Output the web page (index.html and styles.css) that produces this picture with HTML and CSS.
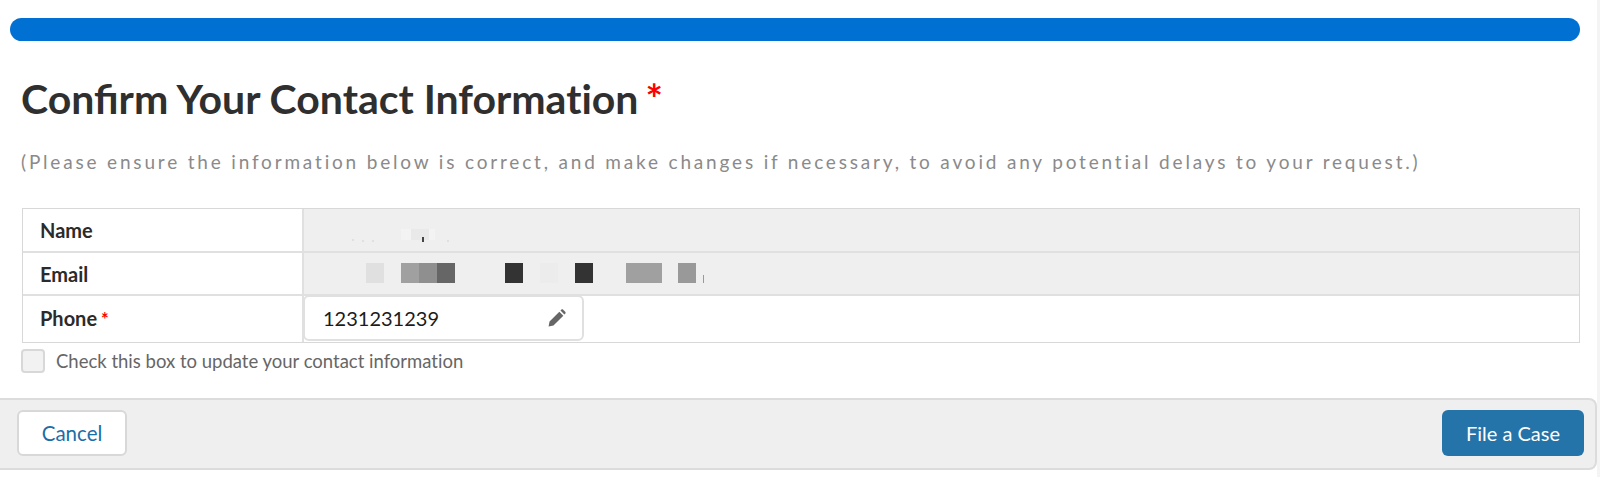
FILE: index.html
```html
<!DOCTYPE html>
<html lang="en">
<head>
<meta charset="utf-8">
<title>Confirm Your Contact Information</title>
<link rel="stylesheet" href="styles.css">
</head>
<body>
<div class="page">
  <main class="main">
    <div class="progress"></div>
    <h1 class="title">Confirm Your Contact <span class="nolig">Information</span> <span class="req title-req">*</span></h1>
    <p class="note">(Please ensure the information below is correct, and make changes if necessary, to avoid any potential delays to your request.)</p>
    <div class="table">
      <div class="row row-name">
        <div class="label">Name</div>
        <div class="value shaded">
          <div class="redact-name"><i class="dot d1"></i><i class="dot d2"></i><i class="dot d3"></i><i class="nb nb1"></i><i class="nb nb2"><i class="mark"></i></i><i class="nb nb3"></i><i class="dot d4"></i></div>
        </div>
      </div>
      <div class="row row-email">
        <div class="label">Email</div>
        <div class="value shaded">
          <div class="redact-email">
            <i class="b c-e0"></i><i class="b gap17 c-a0"></i><i class="b c-90"></i><i class="b c-66"></i>
            <i class="b gap50 c-33"></i><i class="b gap17 c-ee"></i><i class="b gap17 c-33"></i>
            <i class="b wide gap33 c-a0"></i><i class="b gap16 c-99"></i><i class="tick"></i>
          </div>
        </div>
      </div>
      <div class="row row-phone">
        <div class="label label-phone">Phone <span class="req small">*</span></div>
        <div class="value">
          <div class="input">
            <span class="phone">1231231239</span>
            <svg class="pencil" viewBox="0 0 24 24" aria-hidden="true"><path d="M2 22l1.2-6.2L15.6 3.4l5 5L8.2 20.8 2 22zM17 2l1-1c.8-.8 1.7-.8 2.4 0l2.6 2.6c.7.7.7 1.6 0 2.4l-1 1L17 2z"/></svg>
          </div>
        </div>
      </div>
    </div>
    <label class="check"><span class="box"></span><span>Check this box to update your contact information</span></label>
    <footer class="footer">
      <button class="btn cancel" type="button">Cancel</button>
      <button class="btn submit" type="button">File a Case</button>
    </footer>
  </main>
  <div class="strip"></div>
</div>
</body>
</html>
```
FILE: styles.css
```css
* { box-sizing: border-box; }
html, body { margin: 0; height: 100%; background: #fff; overflow: hidden; }
body { font-family: Lato, "Liberation Sans", sans-serif; color: #2f2f2f; }
.page { display: flex; width: 1600px; height: 477px; }
.main { width: 1597px; padding-top: 18px; }
.strip { width: 3px; background: #f4f4f4; }

.progress { height: 23px; margin: 0 17px 0 10px; background: #0070d2; border-radius: 12px; }

.title { margin: 33px 0 0 21px; font-size: 41px; line-height: 50px; font-weight: 700; color: #2f2f2f; }
.nolig { font-variant-ligatures: none; }
.req { color: #f00; }
.title-req { margin-left: -3px; }
.note { margin: 26px 0 0 21px; font-size: 19px; line-height: 24px; letter-spacing: 2.82px; color: #8a8a8a; }

.table { margin: 34px 17px 0 22px; border: 1px solid #d8d8d8; }
.row { display: grid; grid-template-columns: 281px 1fr; font-size: 20px; }
.row + .row { border-top: 2px solid #e0e0e0; }
.row-name { height: 42px; }
.row-email { height: 43px; }
.row-phone { height: 48px; }
.label { display: flex; align-items: center; gap: 4px; padding-left: 17px; font-weight: 700; color: #2b2b2b; border-right: 2px solid #e0e0e0; }
.label-phone { padding-bottom: 3px; }
.value { display: flex; align-items: center; }
.shaded { background: #efefef; }
.req.small { font-size: 18px; margin-top: 3px; }

.redact-name { display: flex; align-items: flex-end; height: 14px; margin: 10px 0 0 48px; }
.dot { display: block; width: 2px; height: 2px; background: #e0e0e0; }
.d2, .d3 { margin-left: 8px; }
.d1 { margin-bottom: 1px; }
.d4 { margin-left: 12px; }
.nb { display: block; position: relative; height: 11px; margin-bottom: 2px; background: #f3f3f3; }
.nb1 { width: 10px; margin-left: 27px; }
.nb2 { width: 18px; background: #e9e9e9; }
.nb3 { width: 6px; }
.mark { display: block; position: absolute; left: 11px; top: 8px; width: 2px; height: 5px; background: #444; }
.redact-email { display: flex; align-items: flex-start; height: 20px; margin: -1px 0 0 62px; }
.b { display: block; width: 18px; height: 20px; }
.b.wide { width: 36px; }
.gap16 { margin-left: 16px; }
.gap17 { margin-left: 17px; }
.gap33 { margin-left: 33px; }
.gap50 { margin-left: 50px; }
.c-e0 { background: #e0e0e0; }
.c-a0 { background: #a0a0a0; }
.c-90 { background: #8f8f8f; }
.c-66 { background: #666; }
.c-33 { background: #333; }
.c-ee { background: #ececec; }
.c-99 { background: #999; }
.tick { display: block; width: 1px; height: 8px; margin: 12px 0 0 7px; background: #999; }

.input { display: flex; align-items: center; justify-content: space-between; width: 281px; height: 46px; padding: 0 16px 0 18px; margin: -2px 0 0 -1px; border: 2px solid #e0e0e0; border-radius: 6px; background: #fff; }
.phone { font-size: 20px; color: #1c1c1c; }
.pencil { width: 19px; height: 19px; fill: #666; }

.check { display: flex; align-items: center; gap: 11px; margin: 6px 0 0 21px; font-size: 18.5px; color: #666; font-variant-ligatures: none; }
.box { width: 24px; height: 24px; background: #f2f2f2; border: 2px solid #d8d8d8; border-radius: 4px; }

.footer { display: flex; justify-content: space-between; align-items: center; height: 72px; margin-top: 25px; padding: 0 11px 2px 17px; background: #efefef; border: 2px solid #dcdcdc; border-left: 0; border-radius: 0 8px 8px 0; }
.btn { height: 46px; font-family: inherit; font-size: 20.5px; border-radius: 6px; }
.cancel { width: 110px; background: #fff; color: #1a6ea8; border: 2px solid #d8d8d8; }
.submit { width: 142px; background: #2574a9; color: #fff; border: 0; font-size: 20px; }
```
